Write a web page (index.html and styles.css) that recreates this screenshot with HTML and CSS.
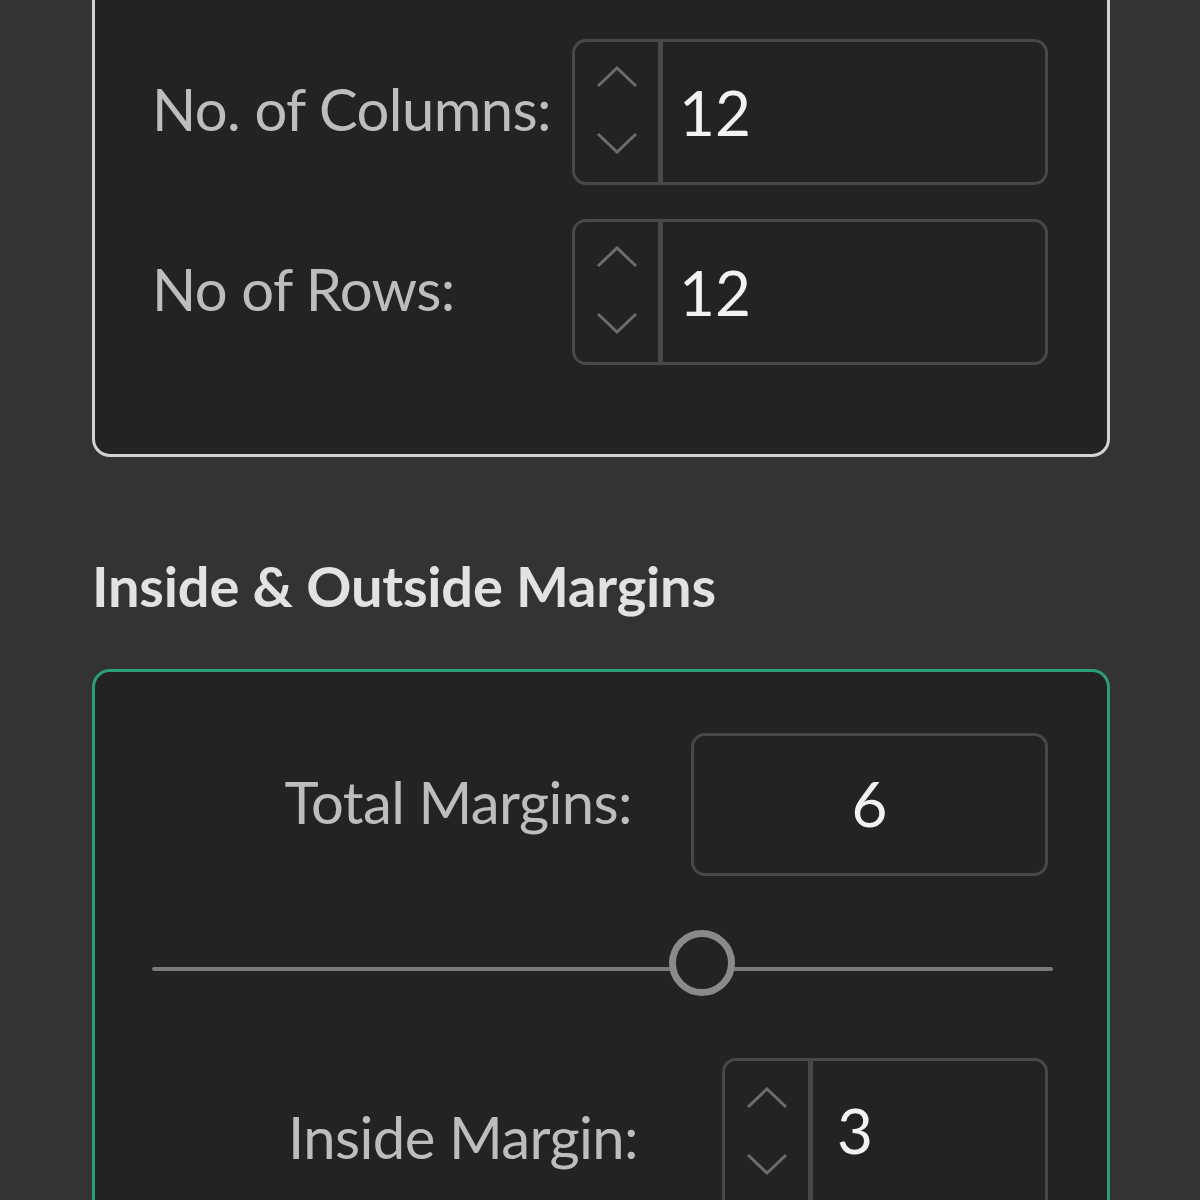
FILE: index.html
```html
<!DOCTYPE html>
<html>
<head>
<meta charset="utf-8">
<link rel="stylesheet" href="styles.css">
</head>
<body>
<div class="page">
  <section class="panel panel-grid">
    <div class="row row-split">
      <span class="label">No. of Columns:</span>
      <div class="spin spin-wide">
        <div class="stepper">
          <svg class="chev" viewBox="0 0 42 22"><polyline points="2,20 21,2 40,20"/></svg>
          <svg class="chev" viewBox="0 0 42 22"><polyline points="2,2 21,20 40,2"/></svg>
        </div>
        <span class="num">12</span>
      </div>
    </div>
    <div class="row row-split">
      <span class="label">No of Rows:</span>
      <div class="spin spin-wide">
        <div class="stepper">
          <svg class="chev" viewBox="0 0 42 22"><polyline points="2,20 21,2 40,20"/></svg>
          <svg class="chev" viewBox="0 0 42 22"><polyline points="2,2 21,20 40,2"/></svg>
        </div>
        <span class="num">12</span>
      </div>
    </div>
  </section>

  <h2 class="heading">Inside &amp; Outside Margins</h2>

  <section class="panel panel-margins">
    <div class="row row-end">
      <span class="label label-total">Total Margins:</span>
      <div class="field">6</div>
    </div>
    <div class="slider">
      <div class="track"></div>
      <div class="thumb"></div>
    </div>
    <div class="row row-end">
      <span class="label label-inside">Inside Margin:</span>
      <div class="spin spin-narrow">
        <div class="stepper">
          <svg class="chev" viewBox="0 0 42 22"><polyline points="2,20 21,2 40,20"/></svg>
          <svg class="chev" viewBox="0 0 42 22"><polyline points="2,2 21,20 40,2"/></svg>
        </div>
        <span class="num num-narrow">3</span>
      </div>
    </div>
  </section>
</div>
</body>
</html>
```

FILE: styles.css
```css
html, body {
  margin: 0;
  padding: 0;
  background: #333333;
  height: 100%;
  overflow: hidden;
}

.page {
  padding-left: 92px;
  width: 1018px;
  font-family: "Lato", "Liberation Sans", sans-serif;
}

.panel {
  background: #232323;
  border-radius: 18px;
  box-sizing: border-box;
}

.panel-grid {
  margin-top: -24px;
  border: 3px solid #d2d2d2;
  padding: 60px 59px 89px 57px;
  display: flex;
  flex-direction: column;
  gap: 34px;
}

.row {
  display: flex;
  align-items: center;
}

.row-split {
  justify-content: space-between;
}

.row-end {
  justify-content: flex-end;
}

.label {
  color: #bdbdbd;
  font-size: 58px;
  line-height: 1;
  letter-spacing: -0.6px;
  padding-bottom: 6px;
}

.spin {
  display: flex;
  height: 146px;
  box-sizing: border-box;
  border: 3px solid #484848;
  border-radius: 14px;
}

.spin-wide {
  width: 476px;
}

.spin-narrow {
  width: 326px;
  height: 150px;
  border-bottom-left-radius: 0;
  border-bottom-right-radius: 0;
}

.stepper {
  width: 83px;
  border-right: 5px solid #484848;
  display: flex;
  flex-direction: column;
  align-items: center;
  justify-content: center;
  gap: 44px;
  padding-bottom: 4px;
  box-sizing: content-box;
}

.spin-narrow .stepper {
  padding-bottom: 4px;
}

.chev {
  width: 42px;
  height: 22px;
  fill: none;
  stroke: #6c6c6c;
  stroke-width: 3;
}

.num {
  color: #f2f2f2;
  font-size: 62px;
  line-height: 1;
  padding-left: 16px;
  align-self: center;
}

.num-narrow {
  padding-left: 24px;
  padding-bottom: 6px;
}

.heading {
  margin: 97px 0 51px;
  color: #e2e2e2;
  font-size: 56px;
  line-height: 64px;
  font-weight: 700;
  letter-spacing: -0.2px;
}

.panel-margins {
  border: 3px solid #2b9e78;
  border-bottom-left-radius: 0;
  border-bottom-right-radius: 0;
  padding: 61px 59px 60px 57px;
  height: 600px;
}

.field {
  width: 357px;
  height: 143px;
  box-sizing: border-box;
  border: 3px solid #484848;
  border-radius: 14px;
  display: flex;
  align-items: center;
  justify-content: center;
  color: #f2f2f2;
  font-size: 62px;
  padding-bottom: 4px;
}

.label-total {
  margin-right: 59px;
}

.label-inside {
  margin-right: 84px;
  padding-bottom: 0;
  padding-top: 8px;
}

.slider {
  position: relative;
  height: 70px;
  margin: 52px -5px 60px 0;
}

.track {
  position: absolute;
  left: 0;
  right: 0;
  top: 39px;
  height: 4px;
  border-radius: 2px;
  background: #7a7a7a;
}

.thumb {
  position: absolute;
  left: 517px;
  top: 2px;
  width: 66px;
  height: 66px;
  box-sizing: border-box;
  border: 7px solid #8a8a8a;
  border-radius: 50%;
  background: #232323;
}
```
